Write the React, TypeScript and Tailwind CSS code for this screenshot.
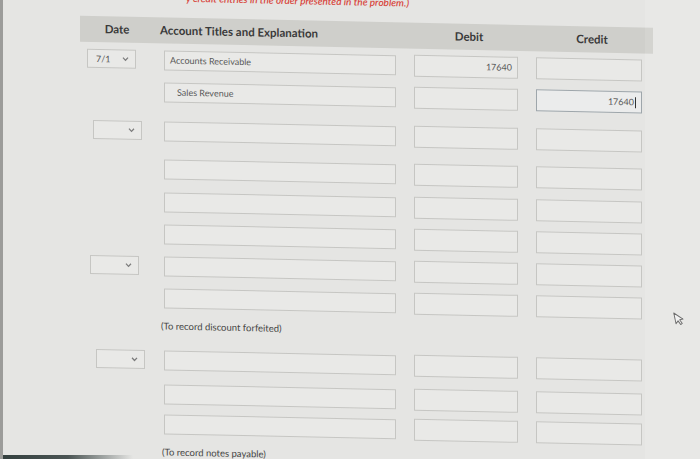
import React from 'react';

type Row = {
  top: string;
  date?: { value: string; offset: string };
  account?: string;
  indent?: boolean;
  debit?: string;
  credit?: string;
  active?: boolean;
};

const ROWS: Row[] = [
  { top: 'mt-[7px]', date: { value: '7/1', offset: 'ml-[7px]' }, account: 'Accounts Receivable', debit: '17640' },
  { top: 'mt-[12px]', account: 'Sales Revenue', indent: true, credit: '17640', active: true },
  { top: 'mt-[19px]', date: { value: '', offset: 'ml-[13px]' } },
  { top: 'mt-[18px]' },
  { top: 'mt-[13px]' },
  { top: 'mt-[12px]' },
  { top: 'mt-[12px]', date: { value: '', offset: 'ml-[10px]' } },
  { top: 'mt-[12px]' },
];

const ROWS_2: Row[] = [
  { top: 'mt-[17px]', date: { value: '', offset: 'ml-[16px]' } },
  { top: 'mt-[14px]' },
  { top: 'mt-[10px]' },
];

const BOX = 'border border-[#c6c6c3] bg-[#e9e9e7]';

function Chevron() {
  return (
    <svg viewBox="0 0 8 6" className="h-[5px] w-[7px]" fill="none">
      <path d="M1 1.2 L4 4.4 L7 1.2" stroke="#7b7b7b" strokeWidth="1.5" />
    </svg>
  );
}

function EntryRow({ row }: { row: Row }) {
  return (
    <div className={`${row.top} ml-[80px] flex h-[20px] items-start`}>
      {/* Date */}
      <div className="w-[84px]">
        {row.date && (
          <div
            className={`${row.date.offset} flex h-[19px] w-[49px] items-center justify-between ${BOX} pl-[8px] pr-[6px] text-[9px] text-[#555]`}
          >
            <span>{row.date.value}</span>
            <Chevron />
          </div>
        )}
      </div>

      {/* Account */}
      <div
        className={`flex h-[20px] w-[232px] shrink-0 items-center ${BOX} ${row.indent ? 'pl-[12px]' : 'pl-[5px]'} text-[9px] text-[#585858]`}
      >
        {row.account}
      </div>

      {/* Debit */}
      <div className={`-mt-[1px] ml-[18px] flex h-[22px] w-[104px] shrink-0 items-center justify-end ${BOX} pr-[5px] text-[9px] text-[#585858]`}>
        {row.debit}
      </div>

      {/* Credit */}
      <div
        className={`-mt-[1px] ml-[18px] flex h-[22px] w-[106px] shrink-0 items-center justify-end border pr-[5px] text-[9px] text-[#585858] ${row.active ? 'border-[#9ea6ab] bg-[#ebecec]' : 'border-[#c6c6c3] bg-[#e9e9e7]'}`}
      >
        {row.credit}
        {row.active && <span className="ml-[1px] h-[11px] w-px bg-[#333]" />}
      </div>
    </div>
  );
}

export default function App() {
  return (
    <div className="relative h-[459px] w-[700px] overflow-hidden border-l-[3px] border-[#9c9c9a] bg-[#e5e5e3] font-['Lato','Liberation_Sans',sans-serif]">
      <div className="-ml-[3px] origin-top-left skew-y-[1.2deg]">
        {/* Instruction line, cut off by the top of the photo */}
        <div className="-mt-[12px] h-[12px] pl-[186px] text-[10px] font-semibold italic leading-[12px] text-[#d8453d]">
          y credit entries in the order presented in the problem.)
        </div>

        {/* Header band */}
        <div className="ml-[80px] mt-[14px] flex h-[26px] w-[573px] items-center bg-[#cfcfcb] text-[11.5px] font-bold text-[#3a3a3a]">
          <div className="w-[74px] text-center">Date</div>
          <div className="w-[250px] pl-[6px]">Account Titles and Explanation</div>
          <div className="w-[130px] text-center">Debit</div>
          <div className="w-[116px] text-center">Credit</div>
        </div>

        {ROWS.map((row, i) => (
          <EntryRow key={i} row={row} />
        ))}

        <div className="ml-[161px] mt-[11px] h-[14px] text-[9.5px] leading-[14px] text-[#454545]">
          (To record discount forfeited)
        </div>

        {ROWS_2.map((row, i) => (
          <EntryRow key={i} row={row} />
        ))}

        <div className="ml-[162px] mt-[11px] h-[14px] text-[9.5px] leading-[14px] text-[#454545]">
          (To record notes payable)
        </div>
      </div>

      {/* Lighter glare on the right of the photo */}
      <div className="pointer-events-none absolute right-0 top-0 h-full w-[55px] bg-white/10" />

      {/* Dark edge at the bottom of the photo */}
      <div className="absolute bottom-0 left-0 h-[4px] w-[130px] bg-gradient-to-r from-[#34403f] via-[#4b5554] to-transparent" />

      {/* Mouse pointer */}
      <svg viewBox="0 0 10 15" className="absolute left-[671px] top-[311px] h-[15px] w-[10px] -rotate-12" fill="none">
        <path d="M1 1 L1 12 L3.6 9.6 L5.4 13.8 L7.2 13 L5.4 8.9 L8.8 8.9 Z" fill="#f2f2f2" stroke="#6f6f6f" strokeWidth="1" strokeLinejoin="round" />
      </svg>
    </div>
  );
}
